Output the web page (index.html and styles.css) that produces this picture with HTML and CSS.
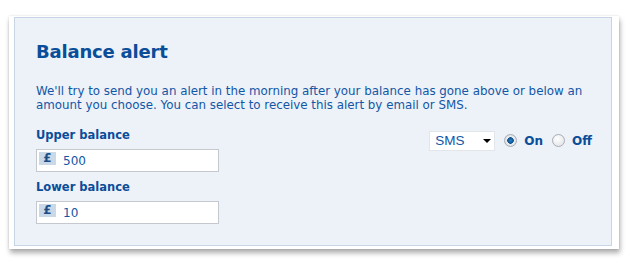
FILE: index.html
```html
<!DOCTYPE html>
<html>
<head>
<meta charset="utf-8">
<link rel="stylesheet" href="styles.css">
</head>
<body>
<div class="card">
  <div class="panel">
    <h1 class="title">Balance alert</h1>
    <p class="intro">We'll try to send you an alert in the morning after your balance has gone above or below an amount you choose. You can select to receive this alert by email or SMS.</p>
    <div class="row">
      <div class="fields">
        <div class="field">
          <div class="label">Upper balance</div>
          <div class="input"><span class="cur">£</span><span class="val">500</span></div>
        </div>
        <div class="field">
          <div class="label">Lower balance</div>
          <div class="input"><span class="cur">£</span><span class="val">10</span></div>
        </div>
      </div>
      <div class="controls">
        <div class="select"><span>SMS</span><span class="arrow"></span></div>
        <span class="radio on"></span><span class="rlabel">On</span>
        <span class="radio"></span><span class="rlabel">Off</span>
      </div>
    </div>
  </div>
</div>
</body>
</html>
```
FILE: styles.css
```css
html, body { margin: 0; padding: 0; background: #fff; }
body { padding: 16px 11px 20px 9px; font-family: "DejaVu Sans", Verdana, sans-serif; color: #1157a6; }
.card {
  width: 598px;
  background: #fff;
  padding: 1px 7px 3px 5px;
  box-shadow: 1px 4px 5px rgba(0,0,0,0.32), 0 0 2px rgba(0,0,0,0.12);
}
.panel {
  background: #edf1f8;
  border: 1px solid #c8d5e4;
  padding: 22px 21px 21px 21px;
}
.title {
  margin: 0;
  font-size: 18px;
  font-weight: bold;
  color: #0a4d98;
  letter-spacing: -0.2px;
  line-height: 24px;
}
.intro {
  margin: 20px 0 0 0;
  font-size: 11.85px;
  line-height: 14px;
}
.row { display: flex; justify-content: space-between; margin-top: 15px; }
.fields { display: flex; flex-direction: column; gap: 7px; }
.label { font-size: 11.5px; font-weight: bold; color: #0a4d98; line-height: 16px; margin-bottom: 6px; }
.input {
  width: 181px; height: 21px;
  background: #fff; border: 1px solid #c5c9cf;
  display: flex; align-items: flex-start;
}
.cur {
  margin: 2px 0 0 2px; width: 17px; height: 13px;
  background: #c9d9e8; color: #1d4d86;
  font-size: 12px; font-weight: bold; line-height: 13px; text-align: center;
}
.val { margin: 3px 0 0 7px; font-size: 12px; line-height: 16px; color: #1157a6; }
.controls { display: flex; align-items: center; height: 19px; margin-top: 4px; margin-right: -2px; }
.select {
  width: 58px; height: 18px; background: #fff; border: 1px solid #e2e5ea;
  display: flex; align-items: center; justify-content: space-between;
  padding: 0 1px 0 5px; font-family: "Liberation Sans", Arial, sans-serif; font-size: 13.5px; color: #1157a6;
}
.arrow { width: 0; height: 0; border-left: 4px solid transparent; border-right: 4px solid transparent; border-top: 4px solid #000; margin-right: 2px; }
.radio {
  width: 11px; height: 11px; border-radius: 50%;
  border: 1px solid #a9adb2;
  background: radial-gradient(circle at 40% 35%, #fff, #dcdfe3);
  margin-left: 9px;
}
.radio.on { background: radial-gradient(circle, #2a7fc2 0, #0f4f8c 3px, #e9eef3 3.5px, #cfd5dc 100%); }
.rlabel { font-size: 12px; font-weight: bold; color: #0a4d98; margin-left: 7px; }
```
